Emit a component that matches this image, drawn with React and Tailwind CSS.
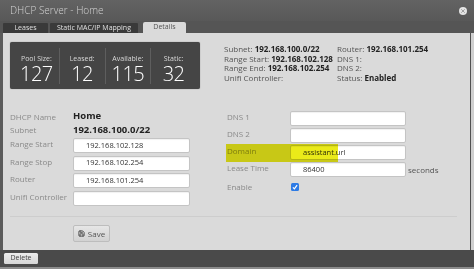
import { Save, X } from 'lucide-react';

const STATS = [
  { label: 'Pool Size:', value: '127' },
  { label: 'Leased:', value: '12' },
  { label: 'Available:', value: '115' },
  { label: 'Static:', value: '32' },
];

const INFO_LEFT = [
  ['Subnet:', '192.168.100.0/22'],
  ['Range Start:', '192.168.102.128'],
  ['Range End:', '192.168.102.254'],
  ['Unifi Controller:', ''],
];

const INFO_RIGHT = [
  ['Router:', '192.168.101.254'],
  ['DNS 1:', ''],
  ['DNS 2:', ''],
  ['Status:', 'Enabled'],
];

function Field({ value }) {
  return (
    <div className="h-[15px] w-full bg-white border border-[#c4c4c4] rounded-[2px] flex items-center px-[12px] text-[7.5px] text-[#333] shadow-[inset_0_1px_1px_rgba(0,0,0,0.06)]">
      {value}
    </div>
  );
}

function Row({ label, children, width = 'w-[117px]', extra }) {
  return (
    <div className="flex items-start h-[15px]">
      <div className="w-[63px] text-[8px] text-[#8a8a8a] leading-[11px]">{label}</div>
      <div className={width}>{children}</div>
      {extra}
    </div>
  );
}

export default function App() {
  return (
    <div
      className="w-[474px] h-[269px] flex flex-col bg-[#5b5b5b] overflow-hidden"
      style={{ fontFamily: '"Open Sans", "Liberation Sans", sans-serif' }}
    >
      {/* title bar */}
      <div className="h-[21px] flex items-center justify-between pl-[10px] pr-[7px] bg-gradient-to-b from-[#636363] to-[#585858]">
        <span className="text-[10px] text-[#d2d2d2] font-light">DHCP Server - Home</span>
        <span className="w-[8px] h-[8px] rounded-full bg-[#e4e4e4] flex items-center justify-center">
          <X size={6} strokeWidth={3} className="text-[#8a8a8a]" />
        </span>
      </div>

      {/* tabs */}
      <div className="h-[12px] flex items-end gap-[2px] pl-[3px] bg-[#555]">
        <div className="h-[10px] w-[45px] bg-[#3a3a3a] flex items-center justify-center text-[7px] text-[#e0e0e0] rounded-t-[1px]">Leases</div>
        <div className="h-[10px] w-[88px] bg-[#3a3a3a] flex items-center justify-center text-[7px] text-[#e0e0e0] rounded-t-[1px]">Static MAC/IP Mapping</div>
        <div className="h-[11px] w-[43px] ml-[3px] bg-[#dadada] flex items-center justify-center text-[7px] text-[#555] rounded-t-[2px]">Details</div>
      </div>

      {/* body */}
      <div className="flex h-[217px]">
        <div className="w-[3px] bg-[#5b5b5b]" />
        <div className="w-[467px] bg-[#dadada] flex flex-col pl-[7px] pt-[9px]">
          {/* summary */}
          <div className="flex h-[47px]">
            <div className="w-[190px] h-[47px] bg-[#454545] rounded-[2px] flex items-center px-[4px] shadow-[0_0_1px_rgba(0,0,0,0.5)]">
              {STATS.map((s, i) => (
                <div
                  key={s.label}
                  className={`flex-1 flex flex-col items-center h-[36px] ${i > 0 ? 'border-l border-[#5e5e5e]' : ''}`}
                >
                  <span className="text-[7px] text-[#d8d8d8] leading-[8px] mt-[7px]">{s.label}</span>
                  <span className="text-[20px] tracking-[-0.5px] font-light text-white leading-[18px] mt-[2px]">{s.value}</span>
                </div>
              ))}
            </div>
            <div className="flex pl-[24px] pt-[2px] text-[8px] text-[#555] leading-[9.5px] whitespace-nowrap">
              <div className="w-[113px] flex flex-col">
                {INFO_LEFT.map(([k, v]) => (
                  <div key={k}>
                    {k} <span className="font-bold text-[#222]">{v}</span>
                  </div>
                ))}
              </div>
              <div className="flex flex-col">
                {INFO_RIGHT.map(([k, v]) => (
                  <div key={k}>
                    {k} <span className="font-bold text-[#222]">{v}</span>
                  </div>
                ))}
              </div>
            </div>
          </div>

          {/* form */}
          <div className="flex mt-[21px] h-[96px]">
            <div className="w-[217px] flex flex-col">
              <div className="flex items-center h-[13px]">
                <div className="w-[63px] text-[8px] text-[#8a8a8a]">DHCP Name</div>
                <div className="text-[9.5px] font-bold text-[#222]">Home</div>
              </div>
              <div className="flex items-center h-[14px]">
                <div className="w-[63px] text-[8px] text-[#8a8a8a]">Subnet</div>
                <div className="text-[9.5px] font-bold text-[#222]">192.168.100.0/22</div>
              </div>
              <div className="flex flex-col gap-[2.5px] mt-[1px]">
                <Row label="Range Start"><Field value="192.168.102.128" /></Row>
                <Row label="Range Stop"><Field value="192.168.102.254" /></Row>
                <Row label="Router"><Field value="192.168.101.254" /></Row>
                <Row label="Unifi Controller"><Field value="" /></Row>
              </div>
            </div>
            <div className="relative flex flex-col gap-[2px] pt-[1px]">
              <Row label="DNS 1" width="w-[116px]"><Field value="" /></Row>
              <Row label="DNS 2" width="w-[116px]"><Field value="" /></Row>
              <Row label="Domain" width="w-[116px]"><Field value="assistant.url" /></Row>
              <Row
                label="Lease Time"
                width="w-[116px]"
                extra={<span className="ml-[2px] text-[8px] text-[#555] leading-[15px]">seconds</span>}
              >
                <Field value="86400" />
              </Row>
              <div className="flex items-center h-[13px] mt-[1px]">
                <div className="w-[64px] text-[8px] text-[#8a8a8a]">Enable</div>
                <span className="w-[8px] h-[8px] rounded-[1.5px] bg-[#2d7be5] flex items-center justify-center">
                  <svg width="6" height="6" viewBox="0 0 10 10">
                    <path d="M1.5 5.5 L4 8 L8.5 2" fill="none" stroke="white" strokeWidth="2" />
                  </svg>
                </span>
              </div>
              <div className="absolute left-[-1px] top-[34px] w-[112px] h-[18px] bg-[rgba(232,232,0,0.9)] mix-blend-multiply" />
            </div>
          </div>

          <div className="mt-[10px] h-px w-[447px] bg-[#cdcdcd]" />
          <div className="mt-[8px] pl-[63px]">
            <button className="h-[17px] w-[37px] flex items-center justify-center gap-[3px] bg-gradient-to-b from-[#e6e6e6] to-[#d2d2d2] border border-[#bdbdbd] rounded-[2px] text-[8px] text-[#555]">
              <Save size={7} strokeWidth={3} className="text-[#444]" />
              Save
            </button>
          </div>
        </div>
        <div className="w-px bg-[#505050]" />
        <div className="w-[3px] bg-[#cfcfcf]" />
      </div>

      {/* footer */}
      <div className="h-[17px] bg-[#4a4a4a] flex items-center pl-[4px]">
        <button className="h-[11px] w-[34px] bg-gradient-to-b from-[#ececec] to-[#d6d6d6] rounded-[1.5px] text-[7px] text-[#444] flex items-center justify-center">
          Delete
        </button>
      </div>
      <div className="h-[2px] bg-[#8c8c8c]" />
    </div>
  );
}
